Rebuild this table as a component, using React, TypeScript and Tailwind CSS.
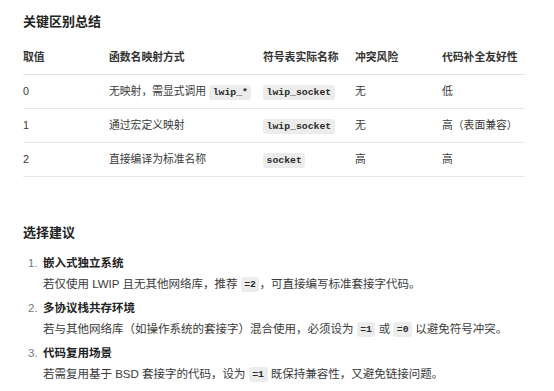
import React from "react";

const Code = ({ children }: { children: React.ReactNode }) => (
  <code className="inline-block rounded-[3px] bg-[#ececec] px-[3.5px] h-[15px] leading-[15px] align-middle text-[9.8px] font-bold text-[#2a2a2a] [font-family:'Liberation_Mono','DejaVu_Sans_Mono',monospace]">
    {children}
  </code>
);

const rows: [string, React.ReactNode, React.ReactNode, string, string][] = [
  ["0", <>无映射，需显式调用 <Code>lwip_*</Code></>, <Code>lwip_socket</Code>, "无", "低"],
  ["1", "通过宏定义映射", <Code>lwip_socket</Code>, "无", "高（表面兼容）"],
  ["2", "直接编译为标准名称", <Code>socket</Code>, "高", "高"],
];

const cols = "grid grid-cols-[86px_154px_92px_87px_83px] items-center";

export default function App() {
  return (
    <div className="w-[554px] h-[391px] overflow-hidden bg-white pl-[23px] pt-[12px] text-[#3a3a3a] [font-family:'Liberation_Sans','Noto_Sans_CJK_SC',sans-serif]">
      <h2 className="h-[20px] leading-[20px] text-[13px] font-bold text-[#222]">关键区别总结</h2>
      <div className="mt-[9px] w-[502px] text-[10.8px]">
        <div className={`${cols} h-[34px] border-b border-[#e3e3e3] font-bold text-[#333]`}>
          <div>取值</div>
          <div>函数名映射方式</div>
          <div>符号表实际名称</div>
          <div>冲突风险</div>
          <div>代码补全友好性</div>
        </div>
        {rows.map((r, i) => (
          <div key={i} className={`${cols} h-[34px] border-b border-[#e8e8e8]`}>
            <div>{r[0]}</div>
            <div>{r[1]}</div>
            <div>{r[2]}</div>
            <div>{r[3]}</div>
            <div>{r[4]}</div>
          </div>
        ))}
      </div>
      <h2 className="mt-[46px] h-[20px] leading-[20px] text-[13px] font-bold text-[#222]">选择建议</h2>
      <ol className="mt-[10px] text-[11.5px]">
        <li className="mb-[3px] flex">
          <span className="w-[20px] shrink-0 pl-[5px] leading-[21px] text-[#777]">1.</span>
          <div>
            <div className="leading-[21px] font-bold text-[#222]">嵌入式独立系统</div>
            <div className="leading-[21px]">若仅使用 LWIP 且无其他网络库，推荐 <Code>=2</Code>，可直接编写标准套接字代码。</div>
          </div>
        </li>
        <li className="mb-[3px] flex">
          <span className="w-[20px] shrink-0 pl-[5px] leading-[21px] text-[#777]">2.</span>
          <div>
            <div className="leading-[21px] font-bold text-[#222]">多协议栈共存环境</div>
            <div className="leading-[21px]">若与其他网络库（如操作系统的套接字）混合使用，必须设为 <Code>=1</Code> 或 <Code>=0</Code> 以避免符号冲突。</div>
          </div>
        </li>
        <li className="mb-[3px] flex">
          <span className="w-[20px] shrink-0 pl-[5px] leading-[21px] text-[#777]">3.</span>
          <div>
            <div className="leading-[21px] font-bold text-[#222]">代码复用场景</div>
            <div className="leading-[21px]">若需复用基于 BSD 套接字的代码，设为 <Code>=1</Code> 既保持兼容性，又避免链接问题。</div>
          </div>
        </li>
      </ol>
    </div>
  );
}
